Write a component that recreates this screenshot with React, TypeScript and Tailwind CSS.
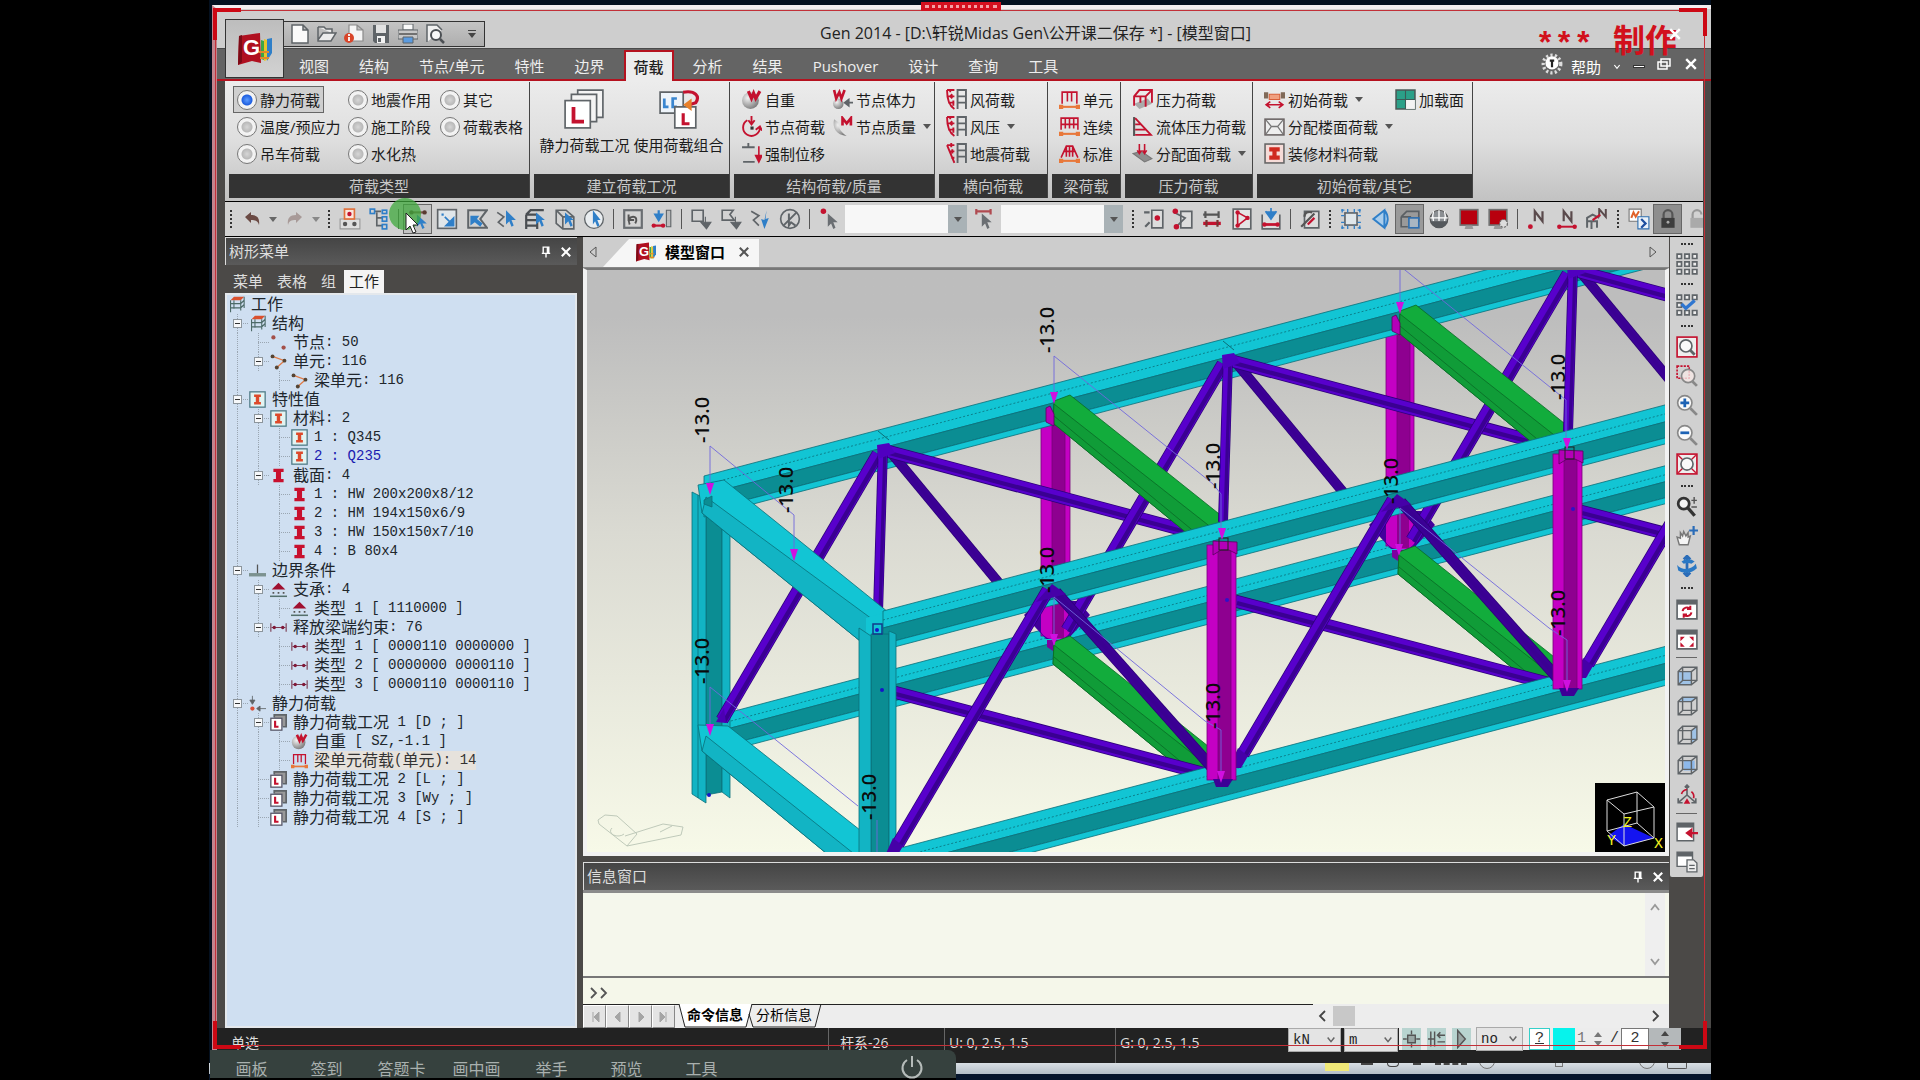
import type { ReactNode } from "react";

/* ---------- icons (20x20 grid) ---------- */

const G = "#5f6468";
const R = "#c4122f";
const B = "#2f7fc8";

const arrow = <path d="M9 6v11l3-3 2 5 2-1-2-4h4z" fill={B} />;
const grayArrow = <path d="M8 5v12l3-3 2 5 2-1-2-5h4z" fill="#6a6e72" />;

const ICONS: Record<string, ReactNode> = {
  undo: <path d="M3 8l6-5v3c6 0 9 3 8 10-1-4-3-5-8-5v3z" fill="#6b4a44" />,
  redo: <path d="M17 8l-6-5v3c-6 0-9 3-8 10 1-4 3-5 8-5v3z" fill="#a89a98" />,
  workTree: (
    <>
      <path d="M1 10h18v9H1z" fill="#dedede" stroke="#999" />
      <rect x="5" y="1" width="9" height="9" fill="#fbe6dc" stroke="#e0703a" strokeWidth="1.500" />
      <circle cx="9.500" cy="5.500" r="2" fill={R} />
      <circle cx="5.500" cy="14.500" r="2" fill="#555" />
      <circle cx="14" cy="14.500" r="2" fill="#555" />
    </>
  ),
  tree: (
    <g fill="none" stroke={B} strokeWidth="1.500">
      <path d="M6 3h6M8 4v5h5M8 9v7h5" stroke={G} />
      <rect x="2" y="1" width="4" height="4" />
      <rect x="13" y="2" width="4" height="3" />
      <rect x="13" y="8" width="4" height="4" />
      <rect x="13" y="15" width="4" height="4" />
    </g>
  ),
  selSingle: (
    <>
      <path d="M3 4h14" stroke="#7a5a4a" strokeWidth="2" />
      <circle cx="4" cy="4" r="2" fill="#5a3a30" />
      <circle cx="16" cy="4" r="2" fill="#5a3a30" />
      {arrow}
    </>
  ),
  selWindow: (
    <>
      <rect x="1.500" y="1.500" width="17" height="17" fill="#e0e6ea" stroke={G} strokeWidth="1.500" />
      <path d="M5 5h2v2H5z" fill={B} />
      <path d="M8 8l6 6M16 9v7H9z" fill={B} stroke={B} strokeWidth="1.500" />
    </>
  ),
  selPolygon: (
    <>
      <path d="M2 2h17l-6 8 6 8H2z" fill="none" stroke={G} strokeWidth="1.800" />
      <path d="M4 7h8l-2 3 5 4-2 3-5-4-4 3z" fill={B} />
    </>
  ),
  selLine: (
    <>
      <path d="M2 4l6 4-5 5 5 4" fill="none" stroke={G} strokeWidth="1.500" />
      <path d="M10 2v13l3-3 2 5 2-1-2-5h4z" fill={B} />
    </>
  ),
  selPlane: (
    <>
      <path d="M2 6l4-4h12M2 6h10M2 11h10M2 16h10M2 6v13M12 6v13" fill="none" stroke="#4a4e52" strokeWidth="2" />
      <path d="M11 4v11l3-3 2 5 2-1-2-5h3z" fill={B} />
    </>
  ),
  selVolume: (
    <>
      <path d="M2 2h9l7 6v11H8l-6-5zM2 2l6 6v11M8 8h10" fill="none" stroke={G} strokeWidth="1.500" />
      <path d="M10 4v11l3-3 2 5 2-1-2-5h3z" fill={B} />
    </>
  ),
  selCircle: (
    <>
      <circle cx="10" cy="10" r="8.500" fill="#e9edf0" stroke={G} strokeWidth="1.200" />
      <path d="M9 2v13l2-3 2 5 2-1-2-5h3z" fill={B} />
    </>
  ),
  selPrev: (
    <>
      <rect x="2" y="2" width="16" height="16" fill="#d4d4d4" stroke="#6a6e72" strokeWidth="2" />
      <path d="M7 15c-2-4 0-7 3-7s4 3 2 6M6 6v5h5" fill="none" stroke="#555" strokeWidth="1.800" />
    </>
  ),
  selNew: (
    <>
      <path d="M7 2v6M4 6l3 5 3-5z" stroke={B} strokeWidth="2" fill={B} />
      <path d="M2 16h9" stroke={R} strokeWidth="2" />
      <circle cx="2.500" cy="16" r="2" fill={R} />
      <circle cx="11" cy="16" r="2" fill={R} />
      <path d="M14 2h4v15h-4z" fill="#bbb" stroke={G} />
    </>
  ),
  unWindow: (
    <>
      <path d="M2 2h10v10H2z" fill="none" stroke={G} strokeWidth="1.500" />
      <path d="M14 8v6M10 13l5 6 4-6z" fill="#5f6468" stroke={G} />
    </>
  ),
  unPolygon: (
    <>
      <path d="M2 2h10l-3 4 4 5H2z" fill="none" stroke={G} strokeWidth="1.500" />
      <path d="M14 8v6M10 13l5 6 4-6z" fill="#5f6468" stroke={G} />
    </>
  ),
  unLine: (
    <>
      <path d="M2 3l7 4-5 4 5 5" fill="none" stroke={G} strokeWidth="1.500" />
      <path d="M16 2l-1 8 3-1-4 10-3-9 3 1z" fill={B} />
    </>
  ),
  unCircle: (
    <>
      <circle cx="10" cy="10" r="8.500" fill="none" stroke={G} strokeWidth="1.500" />
      <path d="M4 16L16 4M9 5v11l2-3 4 3" fill="none" stroke={G} strokeWidth="1.800" />
    </>
  ),
  nodePick: (
    <>
      <circle cx="4" cy="3" r="2.500" fill={R} />
      {grayArrow}
    </>
  ),
  elemPick: (
    <>
      <path d="M2 3h15M3 1v5M16 1v5" stroke="#b04a50" strokeWidth="2" />
      {grayArrow}
    </>
  ),
  actNode: (
    <>
      <path d="M8 2h10v16H8z" fill="#ddd" stroke={G} strokeWidth="1.500" />
      <path d="M1 4h5M2 17l4-4" stroke={G} strokeWidth="2" />
      <circle cx="13" cy="9" r="2.500" fill={R} />
    </>
  ),
  actElem: (
    <>
      <path d="M8 3h10v15H8z" fill="#ddd" stroke={G} strokeWidth="1.500" />
      <path d="M2 4l10 5-8 8" fill="none" stroke={G} strokeWidth="1.500" />
      <circle cx="3" cy="3" r="2.500" fill={R} />
      <circle cx="4" cy="17" r="2.500" fill={R} />
    </>
  ),
  swap: (
    <>
      <path d="M2 6h15M4 3v6M16 3v6" stroke="#555" strokeWidth="2" fill="none" />
      <path d="M2 14h16" stroke={R} strokeWidth="3" />
      <path d="M5 11v6M15 11v6" stroke="#733" strokeWidth="2" />
    </>
  ),
  triNode: (
    <>
      <rect x="2" y="1" width="16" height="18" fill="#e4e4e4" stroke={G} strokeWidth="1.500" />
      <path d="M6 4l9 5-9 7z" fill="none" stroke={R} strokeWidth="1.500" />
      <circle cx="6" cy="4" r="2" fill={R} />
      <circle cx="15" cy="9" r="2" fill={R} />
      <circle cx="6" cy="16" r="2" fill={R} />
    </>
  ),
  importAct: (
    <>
      <path d="M2 6v13h16V6" fill="#ddd" stroke={G} strokeWidth="1.500" />
      <path d="M3 15h14" stroke={R} strokeWidth="2.500" />
      <circle cx="4" cy="15" r="2" fill={R} />
      <circle cx="16" cy="15" r="2" fill={R} />
      <path d="M10 0v7M5 3l5 7 5-7" fill={B} stroke={B} strokeWidth="1.500" />
    </>
  ),
  redraw: (
    <>
      <path d="M5 3h13v15H5z" fill="#ddd" stroke={G} strokeWidth="1.500" />
      <path d="M2 17L14 5M5 8c0-4 3-5 7-4" stroke="#555" strokeWidth="2" fill="none" />
      <path d="M8 15l6-6" stroke={R} strokeWidth="2" />
    </>
  ),
  shrink: (
    <>
      <rect x="4.500" y="4.500" width="11" height="11" fill="#dfe6ea" stroke={G} strokeWidth="1.500" />
      <path
        d="M1 2h3M1 7h3M1 13h3M1 18h3M16 2h3M16 7h3M16 13h3M16 18h3M2 1v3M7 1v3M13 1v3M18 1v3M2 16v3M7 16v3M13 16v3M18 16v3"
        stroke={B}
        strokeWidth="1.200"
      />
    </>
  ),
  perspective: <path d="M14 2v16L4 10zM14 2c4 5 4 11 0 16" fill="#a9cdec" stroke={B} strokeWidth="1.800" />,
  hidden: (
    <>
      <path d="M2 8l5-5h11v9l-5 5M2 8h9M2 8v9h6" fill="none" stroke="#5b6064" strokeWidth="1.500" />
      <rect x="9" y="9" width="9" height="9" fill="#a9b6c2" stroke="#2f6fb0" strokeWidth="1.500" />
    </>
  ),
  globe: (
    <>
      <circle cx="10" cy="10" r="8" fill="#8b8f93" stroke="#555" />
      <path d="M2 9h16M10 2v10M5 3c-1 3-1 6 0 9M15 3c1 3 1 6 0 9" stroke="#fff" strokeWidth="1.200" fill="none" />
      <path d="M2 12h16c-2 5-4 6-8 6s-6-2-8-6z" fill="#55595d" />
    </>
  ),
  monitor: (
    <>
      <rect x="2" y="1.500" width="16" height="14" fill="#b8000e" stroke="#707070" strokeWidth="1.500" />
      <path d="M7 16h6l1 3H6z" fill="#999" />
    </>
  ),
  monitorOpt: (
    <>
      <rect x="2" y="1.500" width="16" height="14" fill="#b8000e" stroke="#707070" strokeWidth="1.500" />
      <path d="M7 16h6l1 3H6z" fill="#999" />
      <circle cx="15" cy="14" r="3.500" fill="#ddd" stroke="#666" strokeDasharray="2 1" />
    </>
  ),
  nodeNo: (
    <>
      <circle cx="4" cy="17" r="2.200" fill={R} />
      <path d="M8 12V3l7 9V3" fill="none" stroke="#5a4a4c" strokeWidth="2" />
    </>
  ),
  elemNo: (
    <>
      <path d="M3 17h14" stroke={R} strokeWidth="1.800" />
      <circle cx="3" cy="17" r="2" fill={R} />
      <circle cx="17" cy="17" r="2" fill={R} />
      <path d="M7 12V3l7 9V3" fill="none" stroke="#5a4a4c" strokeWidth="2" />
    </>
  ),
  propNo: (
    <>
      <path d="M1 18V9l5-3 6 3M1 12h9v6M5 12v7" fill="none" stroke={G} strokeWidth="1.800" />
      <path d="M12 8V1l6 7V1" fill="none" stroke="#5a4a4c" strokeWidth="1.800" />
      <path d="M6 11l7-5" stroke={R} strokeWidth="2" />
    </>
  ),
  convert: (
    <>
      <path d="M1 1h11v11H1z" fill="#fff" stroke="#777" />
      <path d="M3 9l2-5 2 4 3-5" fill="none" stroke="#e0622a" strokeWidth="1.800" />
      <path d="M9 8h10v11H9z" fill="#eaf2fa" stroke="#2f6fb0" />
      <path d="M12 10l4 4-4 4" fill="none" stroke="#1d4fa0" strokeWidth="2" />
    </>
  ),
  lock: (
    <>
      <path d="M6 9V6a4 4 0 018 0v3" fill="none" stroke="#555" strokeWidth="2" />
      <rect x="4" y="9" width="12" height="9" fill="#3d3d3d" />
      <circle cx="10" cy="13" r="1.300" fill="#aaa" />
    </>
  ),
  unlock: (
    <>
      <path d="M6 9V6a4 4 0 018 0" fill="none" stroke="#999" strokeWidth="2" />
      <rect x="4" y="9" width="12" height="9" fill="#aaa" />
    </>
  ),
  newFile: <path d="M2 1h11l5 5v13H2zM13 1v5h5" fill="#fafafa" stroke={G} strokeWidth="1.500" />,
  open: <path d="M1 3h6l2 2h6v4M1 3v13l5-7h13l-5 8H1" fill="#ececec" stroke={G} strokeWidth="1.500" />,
  info: (
    <>
      <path d="M5 1h8l6 5v11H5zM13 1v5h6" fill="#f5f5f5" stroke="#8a8a8a" strokeWidth="1.200" />
      <circle cx="5" cy="14" r="5" fill="#d8452a" />
      <path d="M5 10v2M5 13v4" stroke="#fff" strokeWidth="1.800" />
    </>
  ),
  save: (
    <>
      <path d="M2 1h16v18H4l-2-2z" fill={G} />
      <path d="M5 1h10v8H5z" fill="#e2e2e2" />
      <path d="M6 12h8v7H6z" fill="#f3f3f3" />
      <path d="M7 14h3v4H7z" fill={G} />
    </>
  ),
  print: (
    <>
      <path d="M5 0h10v6H5z" fill="#fafafa" stroke={G} />
      <path d="M0 6h20v9H0z" fill="#c8c8c8" stroke={G} />
      <path d="M1 10h18" stroke="#555" strokeWidth="1.500" />
      <path d="M5 13h10v6H5z" fill="#5b9be0" stroke={G} />
    </>
  ),
  preview: (
    <>
      <path d="M2 18V1h10l5 5" fill="#f0f0f0" stroke={G} strokeWidth="1.500" />
      <circle cx="11" cy="11" r="5" fill="#f8f8f8" stroke="#4c5054" strokeWidth="2" />
      <path d="M15 15l4 4" stroke="#4c5054" strokeWidth="2.500" />
    </>
  ),
  weight: (
    <>
      <circle cx="9" cy="11" r="8" fill="url(#ball)" />
      <path d="M7 2l3 7 2-5 2 5 4-7" fill="none" stroke={R} strokeWidth="3" />
    </>
  ),
  bodyForce: (
    <>
      <circle cx="6" cy="14" r="5" fill="url(#ball)" />
      <path d="M2 1l2 8 3-6 2 6 3-8" fill="none" stroke={R} strokeWidth="2.500" />
      <path d="M20 13h-6M16 10l-4 3 4 3z" stroke={G} strokeWidth="1.500" fill={G} />
    </>
  ),
  nodeMass: (
    <>
      <path d="M2 3c-2 8 2 15 12 16-5-3-8-7-8-13z" fill="url(#ball)" />
      <path d="M10 9V2l4 5 4-5v7" fill="none" stroke={R} strokeWidth="2.500" />
    </>
  ),
  nodeLoad: (
    <>
      <path d="M6 4a8 8 0 1012 7M10 0v7M7 4l3 4 3-4M14 13l4-3 2 4" fill="none" stroke={R} strokeWidth="1.800" />
      <rect x="9" y="10" width="3" height="3" fill="#333" />
    </>
  ),
  dispIcon: (
    <>
      <path d="M1 4h12M7 0v4M2 18h11" stroke={G} strokeWidth="1.800" />
      <path d="M17 3v12M14 12l3 6 3-6z" stroke={R} strokeWidth="1.500" fill={R} />
    </>
  ),
  wind: (
    <>
      <path d="M11 19V1h8v18M11 7h8M11 13h8" fill="none" stroke={G} strokeWidth="1.800" />
      <path d="M1 1h7M1 7h7M2 13h6M1 1c0 9 2 15 7 18M4 0v3M6 5l-2 2 2 2M7 11v5" fill="none" stroke={R} strokeWidth="1.800" />
    </>
  ),
  quake: (
    <>
      <path d="M11 19V1h8v18M11 7h8M11 13h8" fill="none" stroke={G} strokeWidth="1.800" />
      <path d="M1 2h7M3 8h5M5 14h3M1 2l7 17M5 0v4M6 6v4" fill="none" stroke={R} strokeWidth="1.800" />
    </>
  ),
  beamLoad: (
    <>
      <path d="M3 14V3h14v11M8 3v9M12 3v9" fill="none" stroke={R} strokeWidth="1.500" />
      <path d="M1 17h18" stroke="#e8783a" strokeWidth="2" />
      <path d="M0 15h4v4H0zM16 15h4v4h-4z" fill="#e8783a" />
    </>
  ),
  beamCont: (
    <>
      <path d="M2 13V2h16v11M6 2v10M10 2v10M14 2v10M2 8h16" fill="none" stroke={R} strokeWidth="1.500" />
      <path d="M1 17h18" stroke="#e8783a" strokeWidth="2" />
      <path d="M0 15h4v4H0zM16 15h4v4h-4z" fill="#e8783a" />
    </>
  ),
  beamTypical: (
    <>
      <path d="M2 14L7 3h6l5 11M7 3v10M10 3v10M13 3v10M5 8h10" fill="none" stroke={R} strokeWidth="1.500" />
      <path d="M1 17h18" stroke="#e8783a" strokeWidth="2" />
      <path d="M0 15h4v4H0zM16 15h4v4h-4z" fill="#e8783a" />
    </>
  ),
  pressure: (
    <>
      <path d="M2 14l5 5 12-5-4-5z" fill="#aaa" />
      <path d="M2 16V7l5-6h12v12M2 7h11v10M13 7l6-6M8 7v6" fill="none" stroke={R} strokeWidth="1.800" />
    </>
  ),
  fluid: (
    <>
      <path d="M2 1v18" stroke="#555" strokeWidth="2" />
      <path d="M3 2l15 16H3M3 8h5M3 13h10" fill="none" stroke={R} strokeWidth="1.800" />
    </>
  ),
  planeLoad: (
    <>
      <path d="M1 10l8-2 10 7-7 3z" fill="#8d8d8d" stroke="#777" />
      <path d="M7 1v8M12 1v8M5 7l2 3 2-3M10 7l2 3 2-3" fill="none" stroke={R} strokeWidth="1.500" />
    </>
  ),
  initLoad: (
    <>
      <path d="M3 15h14M6 12l-4 3 4 3M14 12l4 3-4 3" fill="none" stroke={R} strokeWidth="1.500" />
      <path d="M5 5h10v5H5z" fill="#f0a080" stroke="#d8603a" />
      <path d="M0 3h4v6H0zM16 3h4v6h-4z" fill="#806a58" />
    </>
  ),
  floorLoad: (
    <>
      <rect x="1" y="3" width="18" height="15" fill="#eee" stroke="#6b6464" strokeWidth="1.500" />
      <path d="M2 4l5 6-5 7M18 4l-5 6 5 7M7 10h6" fill="none" stroke="#777" strokeWidth="1.200" />
    </>
  ),
  finish: (
    <>
      <rect x="1" y="1" width="18" height="18" fill="#f6dcd8" stroke="#666" strokeWidth="1.500" />
      <path d="M5 4h10v4h-3v4h3v4H5v-4h3V8H5z" fill="#cf2a20" />
    </>
  ),
  facePlane: (
    <>
      <rect x="1" y="1" width="18" height="18" fill="#2ba088" stroke="#4a5a58" strokeWidth="1.500" />
      <path d="M10 10h9v9h-9z" fill="#f3f3f3" />
      <path d="M10 1v18M1 10h18" stroke="#3c5b56" />
    </>
  ),
  grid: (
    <path
      d="M1 1h4v4H1zM8 1h4v4H8zM15 1h4v4h-4zM1 8h4v4H1zM8 8h4v4H8zM15 8h4v4h-4zM1 15h4v4H1zM8 15h4v4H8zM15 15h4v4h-4z"
      fill="#eee"
      stroke={G}
      strokeWidth="1.500"
    />
  ),
  gridCheck: (
    <>
      <path
        d="M1 1h4v4H1zM8 1h4v4H8zM15 1h4v4h-4zM1 15h4v4H1zM8 15h4v4H8zM15 15h4v4h-4zM1 8h4v4H1z"
        fill="#eee"
        stroke={G}
        strokeWidth="1.500"
      />
      <path d="M5 9l4 4 8-7" fill="none" stroke="#2f76d0" strokeWidth="3" />
    </>
  ),
  zoomAuto: (
    <>
      <rect x="1" y="1" width="18" height="18" fill="#eee" stroke={R} strokeWidth="1.500" />
      <circle cx="9" cy="9" r="5.500" fill="#fafafa" stroke={G} strokeWidth="1.500" />
      <path d="M13 13l4 4" stroke={G} strokeWidth="2.500" />
    </>
  ),
  zoomWin: (
    <>
      <path d="M1 1h11v11H1z" fill="none" stroke={R} strokeDasharray="2 1" strokeWidth="1.500" />
      <circle cx="11" cy="10" r="6" fill="#f6e8e6" fillOpacity=".8" stroke="#888" strokeWidth="1.500" />
      <path d="M15 15l4 4" stroke="#888" strokeWidth="2.500" />
    </>
  ),
  zoomIn: (
    <>
      <circle cx="8" cy="8" r="6.500" fill="#fafafa" stroke="#888" strokeWidth="1.500" />
      <path d="M13 13l6 6" stroke="#888" strokeWidth="2.500" />
      <path d="M4 8h8M8 4v8" stroke="#1c62b4" strokeWidth="2.500" />
    </>
  ),
  zoomOut: (
    <>
      <circle cx="8" cy="8" r="6.500" fill="#fafafa" stroke="#888" strokeWidth="1.500" />
      <path d="M13 13l6 6" stroke="#888" strokeWidth="2.500" />
      <path d="M4 8h8" stroke="#1c62b4" strokeWidth="2.500" />
    </>
  ),
  zoomFit: (
    <>
      <rect x="1" y="1" width="18" height="18" fill="#eee" stroke={R} strokeWidth="1.500" />
      <path d="M2 2l16 16M18 2L2 18" stroke={R} strokeWidth="1.200" />
      <circle cx="10" cy="10" r="5.500" fill="#fafafa" stroke={G} strokeWidth="1.500" />
    </>
  ),
  zoomDyn: (
    <>
      <circle cx="7" cy="7" r="5" fill="#f4f4f4" stroke="#333" strokeWidth="2.500" />
      <path d="M11 11l6 7" stroke="#333" strokeWidth="3" />
      <path d="M14 4h5M16.500 1v6M14 10h5" stroke="#555" strokeWidth="1.300" />
    </>
  ),
  pan: (
    <>
      <path d="M3 18l-2-7 3 1V7l2 3 1-4 2 4 2-3v4l2-1-2 8z" fill="#f5f5f5" stroke="#777" strokeWidth="1.300" />
      <path d="M12 5h8M16 1v8" stroke="#2a6cb8" strokeWidth="2" />
    </>
  ),
  rotate: (
    <>
      <path d="M10 2v16M7 4l3-3 3 3M7 16l3 3 3-3" fill="none" stroke="#2a6cb8" strokeWidth="2.500" />
      <path d="M1 9c4 5 13 5 17-1l1 4c-5 5-12 5-17 2zM5 6c3-3 9-3 12 0l-3 2c-2-1-5-1-7 0z" fill="#2a78c4" />
    </>
  ),
  winRefresh: (
    <>
      <path d="M1 2h18v17H1z" fill="#fff" stroke={G} strokeWidth="1.500" />
      <path d="M1 2h18v4H1z" fill={G} />
      <path d="M6 12a4 4 0 017-2M14 13a4 4 0 01-7 2M13 7v3h-3M7 18v-3h3" fill="none" stroke={R} strokeWidth="1.800" />
    </>
  ),
  winFit: (
    <>
      <path d="M1 2h18v17H1z" fill="#fff" stroke={G} strokeWidth="1.500" />
      <path d="M1 2h18v4H1z" fill={G} />
      <path d="M4 8h4l-4 4zM16 8h-4l4 4zM4 17h4l-4-4zM16 17h-4l4-4z" fill={R} />
    </>
  ),
  cubeFront: (
    <>
      <path d="M2 6h12v12H2z" fill="#9fc2e6" />
      <path d="M2 6h12v12H2zM6 2h13v12H6zM2 6l4-4M14 6l5-4M14 18l5-4M2 18l4-4" fill="none" stroke={G} strokeWidth="1.300" />
    </>
  ),
  cubeTop: (
    <>
      <path d="M2 6l4-4h13l-5 4z" fill="#9fc2e6" />
      <path d="M2 6h12v12H2zM6 2h13v12H6zM2 6l4-4M14 6l5-4M14 18l5-4M2 18l4-4" fill="none" stroke={G} strokeWidth="1.300" />
    </>
  ),
  cubeSide: (
    <>
      <path d="M14 6l5-4v12l-5 4z" fill="#9fc2e6" />
      <path d="M2 6h12v12H2zM6 2h13v12H6zM2 6l4-4M14 6l5-4M14 18l5-4M2 18l4-4" fill="none" stroke={G} strokeWidth="1.300" />
    </>
  ),
  cubeBack: (
    <>
      <path d="M7 6h10v9H7z" fill="#8db8ea" />
      <path d="M2 6h12v12H2zM6 2h13v12H6zM2 6l4-4M14 6l5-4M14 18l5-4M2 18l4-4" fill="none" stroke={G} strokeWidth="1.300" />
    </>
  ),
  iso: (
    <>
      <path d="M10 10V1M10 10l-8 7M10 10l8 7M8 3l2-2 2 2M2 13v4h4M18 13v4h-4" fill="none" stroke={G} strokeWidth="1.500" />
      <path d="M5 9a6 6 0 015-4M14 7a6 6 0 012 6" fill="none" stroke={R} strokeWidth="1.500" />
      <path d="M7 18l3-5 3 5z" fill={R} />
    </>
  ),
  winPrev: (
    <>
      <path d="M1 2h15v16H1z" fill="#fff" stroke={G} strokeWidth="1.300" />
      <path d="M1 2h15v4H1z" fill={G} />
      <path d="M20 11h-7M14 8l-4 3 4 3z" fill={R} stroke={R} strokeWidth="2" />
    </>
  ),
  winDoc: (
    <>
      <path d="M1 1h14v13H1z" fill="#fff" stroke={G} strokeWidth="1.300" />
      <path d="M1 1h14v4H1z" fill={G} />
      <path d="M10 8h6l3 3v8h-9zM12 13h5M12 16h5" fill="#eee" stroke={G} strokeWidth="1.200" />
    </>
  ),
  frame: (
    <>
      <path d="M3 5l4-4h12l-4 4z" fill="#d9502e" />
      <path d="M3 5v14M15 5v12M19 1v13M3 9h12l4-4M3 14h12l4-4M7 5v10" fill="none" stroke="#4d6a68" strokeWidth="1.300" />
    </>
  ),
  nodes: (
    <>
      <circle cx="4" cy="4" r="2.500" fill="#a34f48" />
      <circle cx="16" cy="16" r="2.500" fill="#a34f48" />
    </>
  ),
  elems: (
    <>
      <path d="M3 4l14 5-9 8" fill="none" stroke="#e07a45" strokeWidth="1.500" />
      <circle cx="3" cy="4" r="2.300" fill="#543" />
      <circle cx="17" cy="9" r="2.300" fill="#543" />
      <circle cx="8" cy="17" r="2.300" fill="#543" />
    </>
  ),
  prop: (
    <>
      <rect x="1" y="1" width="18" height="18" fill="#e2f4f2" stroke="#4d7a86" strokeWidth="1.500" />
      <path d="M6 4h8v3h-2v6h2v3H6v-3h2V7H6z" fill="#dd4a2a" />
    </>
  ),
  section: <path d="M4 2h12v4h-3v8h3v4H4v-4h3V6H4z" fill="#c8102e" />,
  boundary: (
    <>
      <path d="M10 3v11" stroke="#555" strokeWidth="1.500" />
      <path d="M0 13h20v4H0z" fill="#7c9290" />
    </>
  ),
  support: (
    <>
      <path d="M10 2l8 8H2z" fill="#a01030" />
      <path d="M3 14h2M9 14h2M15 14h2" stroke="#555" strokeWidth="2" />
      <path d="M0 18h20" stroke="#55706c" strokeWidth="1.800" />
    </>
  ),
  release: (
    <>
      <path d="M1 5v10M19 5v10M2 10h16" stroke="#7a3a50" strokeWidth="1.300" />
      <circle cx="5" cy="10" r="2" fill="#801838" />
      <circle cx="15" cy="10" r="2" fill="#801838" />
    </>
  ),
  loads: (
    <>
      <path d="M4 1v8M1 6l3 5 3-5zM20 16h-8M13 13l-4 3 4 3z" fill={G} stroke={G} />
      <circle cx="4" cy="16" r="2.500" fill="#d8503a" />
    </>
  ),
  loadCase: (
    <>
      <path d="M5 4V1h14v14h-4" fill="#999" stroke={G} strokeWidth="2" />
      <rect x="1" y="5" width="13" height="14" fill="#fff" stroke="#556" strokeWidth="1.500" />
      <path d="M6 8v7h4" fill="none" stroke={R} strokeWidth="2.500" />
    </>
  ),
  pin: <path d="M6 3h8v9H6zM4 12h12M10 12v6M12 3v9" fill="none" stroke="#fff" strokeWidth="2" />,
  cross: <path d="M4 4l12 12M16 4L4 16" stroke="currentColor" strokeWidth="3" />,
  sheets: (
    <>
      <path d="M7 4V1h12v13h-3" fill="#f4f4f4" stroke={G} strokeWidth=".8" />
      <path d="M4 6V3h12v13h-3" fill="#f4f4f4" stroke={G} strokeWidth=".8" />
      <rect x="1" y="6" width="12" height="13" fill="#fff" stroke={G} strokeWidth=".8" />
      <path d="M5 9v7h5" fill="none" stroke={R} strokeWidth="1.800" />
    </>
  ),
  combine: (
    <>
      <path d="M1 2h11v10H1z" fill="#eef4fa" stroke={G} strokeWidth=".8" />
      <path d="M3 5v4h2M9 5H7v4h2" fill="none" stroke="#3a86d0" strokeWidth="1.300" />
      <path d="M8 9h10v10H8z" fill="#fff" stroke={G} strokeWidth=".8" />
      <path d="M12 12v5h3" fill="none" stroke={R} strokeWidth="1.500" />
      <path d="M12 2c6-1 8 2 6 5l-3 1" fill="none" stroke={R} strokeWidth="1.500" />
      <path d="M16 5v6l-4-3z" fill="#e8802a" />
    </>
  ),
};

function Icon({ name, className = "size-5" }: { name: string; className?: string }) {
  return (
    <svg viewBox="0 0 20 20" className={`${className} shrink-0`} aria-hidden="true">
      {ICONS[name]}
    </svg>
  );
}

function Logo({ className }: { className: string }) {
  return (
    <svg viewBox="0 0 36 34" className={className} aria-hidden="true">
      <path d="M2 4L23 1l1 30-9-2L1 33z" fill="#b01020" />
      <path d="M2 4l3-1v27l-4 3z" fill="#7c0a16" />
      <text x="6" y="23" fontSize="22" fontWeight="700" fill="#fff" fontFamily="Liberation Sans, sans-serif">
        G
      </text>
      <path d="M24 8l3 1v19l-3-1z" fill="#3aa648" />
      <path d="M27 7l3 1v20l-3 1z" fill="#e6c52a" />
      <path d="M30 7l5-1v15l-5 8z" fill="#2f7fc8" />
      <path d="M22 20h10M23 26h9" stroke="#e08a2a" strokeWidth="2" />
    </svg>
  );
}

function Caret({ className = "text-[#555]" }: { className?: string }) {
  return (
    <svg viewBox="0 0 8 5" className={`h-[5px] w-2 shrink-0 ${className}`} aria-hidden="true">
      <path d="M0 0h8L4 5z" fill="currentColor" />
    </svg>
  );
}

function Chevron({ d, className }: { d: string; className: string }) {
  return (
    <svg viewBox="0 0 12 12" className={className} aria-hidden="true">
      <path d={d} fill="none" stroke="currentColor" strokeWidth="1.800" />
    </svg>
  );
}

const UP = "M2 9l4-5 4 5";
const DOWN = "M2 3l4 5 4-5";
const LEFT = "M8 1L3 6l5 5";
const RIGHT = "M4 1l5 5-5 5";

/* ---------- title bar and tabs ---------- */

const TABS = ["视图", "结构", "节点/单元", "特性", "边界", "荷载", "分析", "结果", "Pushover", "设计", "查询", "工具"];
const QUICK = ["newFile", "open", "info", "save", "print", "preview"];

function Header() {
  return (
    <header className="relative">
      <div className="flex h-[39px] items-center bg-[#cecece] pl-[66px]">
        <div className="mt-2.5 flex h-[26px] w-[202px] items-center gap-[7px] border border-[#333] bg-linear-to-b from-[#c4c4c4] to-[#aeaeae] pl-1.5">
          {QUICK.map((name) => (
            <button key={name} type="button" aria-label={name}>
              <Icon name={name} />
            </button>
          ))}
          <div className="ml-4 flex flex-col items-center gap-0.5">
            <span className="h-px w-2 bg-[#444]" />
            <Caret className="text-[#444]" />
          </div>
        </div>
        <h1 className="mt-2 mr-[460px] flex-1 text-right text-base leading-5 whitespace-nowrap text-[#222]">
          Gen 2014 - [D:\轩锐Midas Gen\公开课二保存 *] - [模型窗口]
        </h1>
      </div>
      <nav className="flex h-[33px] items-end border-t border-[#4a4a4a] border-b-2 border-b-[#b5121f] bg-[#646464] pl-[67px]">
        {TABS.map((tab) => (
          <a
            key={tab}
            href="#ribbon"
            className={
              tab === "荷载"
                ? "mx-1 -mb-0.5 flex h-[31px] items-center border-x-2 border-t-2 border-[#b5121f] bg-[#ececec] px-2 text-[15px] leading-5 font-medium text-[#222]"
                : "flex h-[27px] items-center px-[15px] text-[15px] leading-5 text-[#eee]"
            }
          >
            {tab}
          </a>
        ))}
        <div className="ml-auto flex h-full items-center gap-3 pr-3 text-[15px] text-white">
          <svg viewBox="0 0 20 20" className="size-[22px]" aria-hidden="true">
            <circle cx="10" cy="10" r="8" fill="none" stroke="#ddd" strokeWidth="3" strokeDasharray="2 2" />
            <circle cx="10" cy="9" r="6" fill="#fff" />
            <path d="M10 6v7M8 7h4" stroke="#222" strokeWidth="2" />
          </svg>
          <button type="button" className="-ml-1 flex items-center gap-3 pt-1.5">
            帮助
            <Chevron d={DOWN} className="size-2" />
          </button>
          <button type="button" aria-label="最小化" className="mt-1 h-[3px] w-3 border border-[#333] bg-white" />
          <button type="button" aria-label="还原">
            <svg viewBox="0 0 14 12" className="h-3 w-3.5" aria-hidden="true">
              <path d="M4 1h9v7H4zM1 4h9v7H1z" fill="#646464" stroke="#fff" strokeWidth="1.500" />
            </svg>
          </button>
          <button type="button" aria-label="关闭文档">
            <Icon name="cross" className="size-4" />
          </button>
        </div>
      </nav>
      <button
        type="button"
        aria-label="应用菜单"
        className="absolute top-[10px] left-2 flex h-[59px] w-[59px] items-center justify-center border border-[#333] bg-linear-to-b from-[#bdbdbd] to-[#d2d2d2]"
      >
        <Logo className="h-[34px] w-9" />
      </button>
    </header>
  );
}

/* ---------- ribbon ---------- */

type CommandProps = { icon: string; label: string; menu?: boolean; className?: string };

function Command({ icon, label, menu, className = "" }: CommandProps) {
  return (
    <button type="button" className={`flex h-[27px] items-center gap-[3px] text-left whitespace-nowrap ${className}`}>
      <Icon name={icon} className="size-[21px]" />
      {label}
      {menu && <Caret className="ml-1 text-[#555]" />}
    </button>
  );
}

function RibbonGroup({ title, className, children }: { title: string; className: string; children: ReactNode }) {
  return (
    <section className={`mr-1 flex shrink-0 flex-col border-r border-[#444] ${className}`}>
      <div className="flex-1 pt-1">{children}</div>
      <h2 className="flex h-6 items-center justify-center bg-[#333] text-[15px] text-[#c9c9c9]">{title}</h2>
    </section>
  );
}

const LOAD_TYPES = ["静力荷载", "地震作用", "其它", "温度/预应力", "施工阶段", "荷载表格", "吊车荷载", "水化热"];

function Ribbon() {
  return (
    <div
      id="ribbon"
      className="flex h-[120px] bg-linear-to-b from-[#ececec] via-[#dedede] to-[#c2c2c2] pt-px pb-[3px] pl-1 text-[15px] leading-5 text-[#1c1c1c]"
    >
      <RibbonGroup title="荷载类型" className="w-[301px]">
        <div className="grid grid-cols-[111px_92px_1fr] pl-1">
          {LOAD_TYPES.map((label) => (
            <label
              key={label}
              className={
                label === "静力荷载"
                  ? "flex h-[27px] w-[91px] items-center gap-[3px] border border-[#666] bg-[#cfcfcf] pl-[3px] whitespace-nowrap"
                  : "flex h-[27px] items-center gap-[3px] pl-1 whitespace-nowrap"
              }
            >
              <input
                type="radio"
                name="loadType"
                defaultChecked={label === "静力荷载"}
                className="size-5 shrink-0 appearance-none rounded-full border border-[#777] bg-[radial-gradient(circle,#d6d6d6_0,#b9b9b9_5px,#f4f4f4_6px,#ececec_100%)] checked:bg-[radial-gradient(circle,#5b9bff_0,#1f5fe0_5px,#f4f4f4_6px,#ececec_100%)]"
              />
              {label}
            </label>
          ))}
        </div>
      </RibbonGroup>
      <RibbonGroup title="建立荷载工况" className="w-[196px]">
        <div className="flex justify-center gap-1 pt-0.5">
          <button type="button" className="flex flex-col items-center gap-[5px] whitespace-nowrap">
            <Icon name="sheets" className="size-[42px]" />
            静力荷载工况
          </button>
          <button type="button" className="flex flex-col items-center gap-[5px] whitespace-nowrap">
            <Icon name="combine" className="size-[42px]" />
            使用荷载组合
          </button>
        </div>
      </RibbonGroup>
      <RibbonGroup title="结构荷载/质量" className="w-[201px]">
        <div className="grid grid-cols-[91px_1fr] pl-[7px]">
          <Command icon="weight" label="自重" />
          <Command icon="bodyForce" label="节点体力" />
          <Command icon="nodeLoad" label="节点荷载" />
          <Command icon="nodeMass" label="节点质量" menu />
          <Command icon="dispIcon" label="强制位移" />
        </div>
      </RibbonGroup>
      <RibbonGroup title="横向荷载" className="w-[109px]">
        <div className="flex flex-col pl-[7px]">
          <Command icon="wind" label="风荷载" />
          <Command icon="wind" label="风压" menu />
          <Command icon="quake" label="地震荷载" />
        </div>
      </RibbonGroup>
      <RibbonGroup title="梁荷载" className="w-[69px]">
        <div className="flex flex-col pl-[7px]">
          <Command icon="beamLoad" label="单元" />
          <Command icon="beamCont" label="连续" />
          <Command icon="beamTypical" label="标准" />
        </div>
      </RibbonGroup>
      <RibbonGroup title="压力荷载" className="w-[128px]">
        <div className="flex flex-col pl-[7px]">
          <Command icon="pressure" label="压力荷载" />
          <Command icon="fluid" label="流体压力荷载" />
          <Command icon="planeLoad" label="分配面荷载" menu />
        </div>
      </RibbonGroup>
      <RibbonGroup title="初始荷载/其它" className="w-[216px]">
        <div className="grid grid-cols-[131px_1fr] pl-[7px]">
          <Command icon="initLoad" label="初始荷载" menu />
          <Command icon="facePlane" label="加载面" />
          <Command icon="floorLoad" label="分配楼面荷载" menu className="col-span-2" />
          <Command icon="finish" label="装修材料荷载" className="col-span-2" />
        </div>
      </RibbonGroup>
    </div>
  );
}

/* ---------- main toolbar ---------- */

function Grip() {
  return (
    <div className="flex w-3 shrink-0 justify-center">
      <div className="h-[18px] border-l-2 border-dotted border-[#333]" />
    </div>
  );
}

function Sep() {
  return <div className="mx-1 h-5 w-px shrink-0 bg-[#555]" />;
}

const TOOL = "flex h-[30px] w-[29px] items-center justify-center";
const TOOL_STATE: Record<string, string> = {
  selSingle: "border border-[#666] bg-[#c4c4c4]",
  hidden: "border border-[#666] bg-[#9a9a9a]",
  lock: "border border-[#666] bg-[#8e8e8e]",
};

function ToolGroup({ icons, className }: { icons: string[]; className: string }) {
  return (
    <div className={`flex shrink-0 justify-around ${className}`}>
      {icons.map((name) => (
        <button key={name} type="button" aria-label={name} className={`${TOOL} ${TOOL_STATE[name] ?? ""}`}>
          <Icon name={name} className="size-[22px]" />
        </button>
      ))}
    </div>
  );
}

function Combo({ label }: { label: string }) {
  return (
    <div className="relative h-[28px] w-[122px] shrink-0 bg-[#f7f7f7]">
      <select aria-label={label} className="size-full appearance-none bg-transparent px-2" />
      <span className="pointer-events-none absolute inset-y-0 right-0 flex w-[19px] items-center justify-center bg-[#a9b2b6]">
        <Caret />
      </span>
    </div>
  );
}

function Toolbar() {
  return (
    <div className="flex h-[36px] shrink-0 items-center overflow-hidden border-y border-black bg-[#d2d2d2]">
      <Grip />
      <button type="button" aria-label="撤销" className="flex w-[29px] shrink-0 justify-center">
        <Icon name="undo" />
      </button>
      <Caret className="mx-[3px] text-[#666]" />
      <button type="button" aria-label="重做" className="flex w-[29px] shrink-0 justify-center">
        <Icon name="redo" />
      </button>
      <Caret className="mx-[3px] text-[#888]" />
      <Grip />
      <ToolGroup className="w-[59px]" icons={["workTree", "tree"]} />
      <Sep />
      <ToolGroup
        className="w-[206px]"
        icons={["selSingle", "selWindow", "selPolygon", "selLine", "selPlane", "selVolume", "selCircle"]}
      />
      <Sep />
      <ToolGroup className="w-[59px]" icons={["selPrev", "selNew"]} />
      <Sep />
      <ToolGroup className="w-[119px]" icons={["unWindow", "unPolygon", "unLine", "unCircle"]} />
      <Sep />
      <ToolGroup className="w-[31px]" icons={["nodePick"]} />
      <Combo label="选择节点" />
      <ToolGroup className="w-[34px]" icons={["elemPick"]} />
      <Combo label="选择单元" />
      <div className="w-1 shrink-0" />
      <Grip />
      <ToolGroup className="w-[147px]" icons={["actNode", "actElem", "swap", "triNode", "importAct"]} />
      <Sep />
      <ToolGroup className="w-[29px]" icons={["redraw"]} />
      <Grip />
      <ToolGroup
        className="w-[177px]"
        icons={["shrink", "perspective", "hidden", "globe", "monitor", "monitorOpt"]}
      />
      <Sep />
      <ToolGroup className="w-[90px]" icons={["nodeNo", "elemNo", "propNo"]} />
      <Grip />
      <ToolGroup className="w-[88px]" icons={["convert", "lock", "unlock"]} />
    </div>
  );
}

/* ---------- tree panel ---------- */

type Row = { level: number; icon: string; text: string; open?: boolean; tone?: "blue" | "hot"; lines?: number[] };

const TREE: Row[] = [
  { level: 0, icon: "frame", text: "工作" },
  { level: 1, icon: "frame", text: "结构", open: true },
  { level: 2, icon: "nodes", text: "节点: 50", lines: [1] },
  { level: 2, icon: "elems", text: "单元: 116", open: true, lines: [1] },
  { level: 3, icon: "elems", text: "梁单元: 116", lines: [1] },
  { level: 1, icon: "prop", text: "特性值", open: true },
  { level: 2, icon: "prop", text: "材料: 2", open: true, lines: [1] },
  { level: 3, icon: "prop", text: "1 : Q345", lines: [1, 2] },
  { level: 3, icon: "prop", text: "2 : Q235", tone: "blue", lines: [1, 2] },
  { level: 2, icon: "section", text: "截面: 4", open: true, lines: [1] },
  { level: 3, icon: "section", text: "1 : HW 200x200x8/12", lines: [1] },
  { level: 3, icon: "section", text: "2 : HM 194x150x6/9", lines: [1] },
  { level: 3, icon: "section", text: "3 : HW 150x150x7/10", lines: [1] },
  { level: 3, icon: "section", text: "4 : B 80x4", lines: [1] },
  { level: 1, icon: "boundary", text: "边界条件", open: true },
  { level: 2, icon: "support", text: "支承: 4", open: true, lines: [1] },
  { level: 3, icon: "support", text: "类型 1 [ 1110000 ]", lines: [1, 2] },
  { level: 2, icon: "release", text: "释放梁端约束: 76", open: true, lines: [1] },
  { level: 3, icon: "release", text: "类型 1 [ 0000110 0000000 ]", lines: [1] },
  { level: 3, icon: "release", text: "类型 2 [ 0000000 0000110 ]", lines: [1] },
  { level: 3, icon: "release", text: "类型 3 [ 0000110 0000110 ]", lines: [1] },
  { level: 1, icon: "loads", text: "静力荷载", open: true },
  { level: 2, icon: "loadCase", text: "静力荷载工况 1 [D ; ]", open: true },
  { level: 3, icon: "weight", text: "自重 [ SZ,-1.1 ]", lines: [2] },
  { level: 3, icon: "beamLoad", text: "梁单元荷载(单元): 14", tone: "hot", lines: [2] },
  { level: 2, icon: "loadCase", text: "静力荷载工况 2 [L ; ]" },
  { level: 2, icon: "loadCase", text: "静力荷载工况 3 [Wy ; ]" },
  { level: 2, icon: "loadCase", text: "静力荷载工况 4 [S ; ]" },
];

// Chinese runs are set at 16px, the monospaced Latin runs at 14px.
function TreeText({ text }: { text: string }) {
  return (
    <>
      {text.split(/([\u4e00-\u9fff]+)/).map((run, i) =>
        i % 2 === 1 ? (
          <span key={i} className="text-base leading-[19px]">
            {run}
          </span>
        ) : (
          <span key={i} className="font-['Liberation_Mono','Noto_Sans_CJK_SC',monospace] text-sm leading-[19px] whitespace-pre">
            {run}
          </span>
        ),
      )}
    </>
  );
}

function TreeRow({ row }: { row: Row }) {
  const guides = Array.from({ length: Math.max(row.level - 1, 0) }, (_, i) => i + 1);
  const tone = row.tone === "blue" ? "text-[#1b1bb0]" : row.tone === "hot" ? "bg-[#e6e2dc] text-[#333]" : "text-[#20262c]";
  return (
    <li className="flex h-[19px] items-center">
      {guides.map((g) => (
        <span key={g} className="flex h-full w-[21px] shrink-0 justify-center">
          {(g === 1 || row.lines?.includes(g)) && <span className="h-full border-l border-dotted border-[#9aa6b2]" />}
        </span>
      ))}
      {row.level > 0 && (
        <span className="relative flex h-full w-[21px] shrink-0 items-center justify-center">
          <span className="absolute inset-y-0 left-[10px] border-l border-dotted border-[#9aa6b2]" />
          <span className="absolute top-[9px] right-0 left-[10px] border-t border-dotted border-[#9aa6b2]" />
          {row.open && (
            <button
              type="button"
              aria-label="折叠"
              className="relative flex size-[9px] items-center justify-center border border-[#8c959c] bg-[#f6f8fa]"
            >
              <span className="h-px w-[5px] bg-[#333]" />
            </button>
          )}
        </span>
      )}
      <Icon name={row.icon} className="ml-px size-[17px]" />
      <span className={`ml-1.5 flex h-full items-center whitespace-nowrap ${tone}`}>
        <TreeText text={row.text} />
      </span>
    </li>
  );
}

function PanelTitle({ title }: { title: string }) {
  return (
    <div className="flex h-[28px] shrink-0 items-center border-t border-l border-[#ddd] bg-linear-to-b from-[#454545] to-[#5a5a5a] pr-1 pl-[3px] text-[15px] text-[#ddd]">
      <h2 className="flex-1">{title}</h2>
      <button type="button" aria-label="固定" className="mr-1.5">
        <Icon name="pin" className="size-3.5" />
      </button>
      <button type="button" aria-label="关闭" className="text-white">
        <Icon name="cross" className="size-3.5" />
      </button>
    </div>
  );
}

function TreePanel() {
  return (
    <aside className="flex w-[352px] shrink-0 flex-col">
      <PanelTitle title="树形菜单" />
      <div className="flex h-[28px] shrink-0 items-end gap-[14px] pl-2 text-[15px] leading-[23px] text-[#ddd]">
        <button type="button">菜单</button>
        <button type="button">表格</button>
        <button type="button">组</button>
        <button type="button" className="-ml-1.5 bg-[#f4f4f4] px-[5px] text-[#222]">
          工作
        </button>
      </div>
      <div className="min-h-0 flex-1 overflow-hidden border-2 border-[#e4e8ec] bg-[#cfdff1]">
        <ul>
          {TREE.map((row, i) => (
            <TreeRow key={i} row={row} />
          ))}
        </ul>
      </div>
    </aside>
  );
}

/* ---------- model view ---------- */

const SLOPE = -0.2635;
const LIGHT = "#12c5d4";
const MID = "#12b4c4";
const DARK = "#0b8d93";
const EDGE = "#0a6f78";

// An I-section chord: top flange, web and bottom flange between x1 and x2.
function Chord({ x1, y1, x2, h = 39 }: { x1: number; y1: number; x2: number; h?: number }) {
  const dy = (x2 - x1) * SLOPE;
  const band = (a: number, b: number) => `${x1},${y1 + a} ${x2},${y1 + dy + a} ${x2},${y1 + dy + b} ${x1},${y1 + b}`;
  return (
    <g stroke={EDGE} strokeWidth=".8">
      <polygon points={band(0, h - 22)} fill={LIGHT} />
      <polygon points={band(h - 22, h - 6)} fill={DARK} />
      <polygon points={band(h - 6, h)} fill={LIGHT} />
      <line x1={x1} y1={y1 + 9} x2={x2} y2={y1 + dy + 9} strokeDasharray="2 2" />
    </g>
  );
}

function Brace({ p, w = 12, dark = false }: { p: [number, number, number, number]; w?: number; dark?: boolean }) {
  const [x1, y1, x2, y2] = p;
  return (
    <g>
      <line x1={x1} y1={y1} x2={x2} y2={y2} stroke="#2c0078" strokeWidth={w} />
      <line x1={x1} y1={y1} x2={x2} y2={y2} stroke={dark ? "#3c0096" : "#5800cc"} strokeWidth={w - 1.5} />
      <line x1={x1 + 2} y1={y1 + 2} x2={x2 + 2} y2={y2 + 2} stroke="#3a0092" strokeWidth={w / 3} />
    </g>
  );
}

function MagentaColumn({ x, y1, y2, w = 29 }: { x: number; y1: number; y2: number; w?: number }) {
  return (
    <g stroke="#78007c" strokeWidth=".8">
      <rect x={x} y={y1} width={w} height={y2 - y1} fill="#c400c4" />
      <rect x={x + 11} y={y1} width={13} height={y2 - y1} fill="#8e0090" />
    </g>
  );
}

function GreenBeam({ dx, dy }: { dx: number; dy: number }) {
  return (
    <g transform={`translate(${dx} ${dy})`} stroke="#0a6a26" strokeWidth=".8">
      <polygon points="1054,401 1070,395 1228,521 1216,532 1205,548 1053,423" fill="#12ac3c" />
      <polygon points="1054,404 1217,532 1205,548 1053,423" fill="#109c38" />
      <path d="M1054 416L1208 543" fill="none" />
    </g>
  );
}

function Arrow({ x, y }: { x: number; y: number }) {
  return <polygon points={`${x - 4},${y - 11} ${x + 4},${y - 11} ${x},${y + 1}`} fill="#d010e0" />;
}

const BAYS = [
  [0, 0],
  [345, -90],
  [690, -180],
];

const LABELS: [number, number][] = [
  [702, 420],
  [786, 490],
  [1047, 330],
  [702, 661],
  [869, 797],
  [1047, 570],
  [1213, 466],
  [1391, 481],
  [1558, 377],
  [1213, 706],
  [1558, 613],
];

function ModelView() {
  return (
    <svg viewBox="587 270 1078 582" preserveAspectRatio="xMinYMin slice" className="block size-full" role="img" aria-label="模型">
      <Chord x1={727} y1={713} x2={1700} h={38} />
      {/* back columns */}
      <MagentaColumn x={1041} y1={424} y2={636} />
      <MagentaColumn x={1386} y1={334} y2={546} w={28} />
      {[0, 1].map((i) => (
        <g key={i} transform={`translate(${i * 345} ${i * -90})`}>
          <path d="M1024 615l22 24h22l22-24-12-14h-40z" fill="#42009c" />
          <path d="M1041 600h29v32c-4 10-24 10-29 0z" fill="#c400c4" />
          <path d="M1052 600h12v38h-12z" fill="#8e0090" />
          <path d="M1047 640h12v8l-6 3-6-4z" fill="#7c00a0" />
        </g>
      ))}
      <GreenBeam dx={0} dy={241} />
      <GreenBeam dx={345} dy={151} />
      {BAYS.map(([dx, dy]) => (
        <Brace key={dx} p={[890 + dx, 691 + dy, 1206 + dx, 774 + dy]} w={13} />
      ))}
      <Chord x1={870} y1={856} x2={1700} />

      {/* rear left column */}
      <g stroke={EDGE} strokeWidth=".8">
        <polygon points="706,500 722,500 722,792 706,795" fill={DARK} />
        <polygon points="722,510 730,512 730,798 722,792" fill={MID} />
        <polygon points="692,492 706,499 706,803 692,794" fill={MID} />
        <line x1="698" y1="495" x2="698" y2="798" />
      </g>

      <Chord x1={704} y1={476} x2={1700} h={41} />
      {BAYS.map(([dx, dy]) => (
        <g key={dx}>
          <Brace p={[878 + dx, 454 + dy, 722 + dx, 720 + dy]} w={13} />
          <Brace p={[888 + dx, 449 + dy, 1003 + dx, 588 + dy]} w={10} dark />
          <Brace p={[887 + dx, 451 + dy, 1206 + dx, 536 + dy]} w={13} />
        </g>
      ))}
      <GreenBeam dx={0} dy={0} />
      <GreenBeam dx={346} dy={-90} />
      {BAYS.map(([dx, dy]) => (
        <g key={dx}>
          <Brace p={[883 + dx, 447 + dy, 878 + dx, 612 + dy]} w={10} />
          <path d={`M${877 + dx} ${445 + dy}l12-2 6 10-17 6z`} fill="#5000c0" />
          <path d={`M${878 + dx} ${431 + dy}l11 9`} stroke={EDGE} fill="none" />
        </g>
      ))}

      {/* end frame cross beams */}
      <g stroke={EDGE} strokeWidth=".8">
        <polygon points="698,725 728,726 860,830 860,858 832,858 702,751" fill={LIGHT} />
        <polygon points="706,736 858,857 832,858 702,751" fill={MID} />
        <polygon points="698,485 724,480 888,612 872,620 865,645 702,513" fill={LIGHT} />
        <polygon points="706,497 872,619 865,645 702,513" fill={MID} />
        <polygon points="704,500 712,496 712,507 704,504" fill={DARK} />
      </g>
      <polygon points="716,722 724,708 726,723" fill="#4c00b4" />

      <polygon points="866,618 890,611 890,636 866,640" fill={LIGHT} />
      <Chord x1={883} y1={611} x2={1700} />
      <g stroke={EDGE} strokeWidth=".8">
        <polygon points="871,634 889,634 889,860 871,860" fill={DARK} />
        <polygon points="889,631 896,634 896,860 889,860" fill={MID} />
        <polygon points="859,628 871,636 871,860 859,860" fill={MID} />
      </g>
      <rect x="873" y="624" width="9" height="10" fill="none" stroke="#123a8a" strokeWidth="1.500" />
      <circle cx="877" cy="630" r="2" fill="#1616c8" />
      <circle cx="882" cy="690" r="2" fill="#1616c8" />
      <circle cx="709" cy="795" r="2" fill="#1616c8" />

      {/* front face bracing */}
      {BAYS.map(([dx, dy]) => (
        <g key={dx}>
          <Brace p={[1048 + dx, 590 + dy, 898 + dx, 844 + dy]} w={13} />
          <path d={`M${893 + dx} ${838 + dy}l10 8-7 12h-12z`} fill="#4600a8" />
          <Brace p={[1056 + dx, 592 + dy, 1216 + dx, 772 + dy]} w={11} dark />
          <path d={`M${1052 + dx} ${584 + dy}l14 10-30 8z`} fill="#4600a8" />
        </g>
      ))}

      {[0, 1].map((i) => (
        <g key={i}>
          <MagentaColumn x={1207 + i * 346} y1={545 - i * 91} y2={780 - i * 91} />
          <path
            d={`M${1213 + i * 346} ${541 - i * 91}v14l8-5h8l8 4v-12z`}
            fill="#b400b8"
            stroke="#58005c"
            strokeWidth=".8"
          />
          <rect x={1219 + i * 346} y={538 - i * 91} width="9" height="12" fill="none" stroke="#222" />
          <path d={`M${1213 + i * 346} ${779 - i * 91}h20l-5 8h-12z`} fill="#3c0096" />
          <circle cx={1227 + i * 346} cy={600 - i * 91} r="2" fill="#3010c8" />
          <path d={`M${1050 + i * 346} ${406 - i * 91}l-4 2v14l8 4v-12z`} fill="#b400b8" stroke="#58005c" strokeWidth=".8" />
        </g>
      ))}

      {/* load diagram */}
      <g fill="none" stroke="#7068dc" strokeWidth=".9">
        <path d="M710 490V446L794 515V560" />
        <path d="M710 733V687L858 806M877 852V820" />
        <path d="M1054 400V356L1213 484L1221 494V535" />
        <path d="M1054 645V597L1205 721L1221 730V778" />
        <path d="M1400 305V266L1566 400V445" />
        <path d="M1400 548V508L1549 628L1567 640V688" />
      </g>
      <Arrow x={710} y={494} />
      <Arrow x={794} y={560} />
      <Arrow x={710} y={735} />
      <Arrow x={1054} y={403} />
      <Arrow x={1054} y={645} />
      <Arrow x={1222} y={539} />
      <Arrow x={1221} y={782} />
      <Arrow x={1400} y={313} />
      <Arrow x={1399} y={555} />
      <Arrow x={1567} y={449} />
      <Arrow x={1567} y={691} />

      <g fontFamily="'Noto Sans', sans-serif" fontSize="20" fontWeight="500" fill="#0a0a0a" textAnchor="middle">
        {LABELS.map(([x, y]) => (
          <text key={`${x}-${y}`} transform={`translate(${x + 7} ${y}) rotate(-90)`}>
            -13.0
          </text>
        ))}
      </g>

      <path
        d="M598 820l7-5 12 1 20 18-10 12-28-22zM627 846l54-11 2-8-20-3-38 12M612 828a6 4 0 1012 6M660 832l12-6"
        fill="none"
        stroke="#b9c4b4"
        strokeWidth=".9"
      />

      {/* orientation cube */}
      <rect x="1595" y="783" width="70" height="70" fill="#000" />
      <path d="M1608 836l16-12 30 14-30 8z" fill="#1414f0" />
      <path
        d="M1607 800l30-8 17 15-30 7zM1607 800v31l17 15 30-8v-31M1624 814v32M1637 792v31l17 15M1637 823l-30 8"
        fill="none"
        stroke="#ddd"
      />
      <g fontFamily="'Liberation Mono', monospace" fontSize="15" fill="#f0f020">
        <text x="1623" y="827">Z</text>
        <text x="1607" y="845">Y</text>
        <text x="1654" y="848">X</text>
      </g>
    </svg>
  );
}

function ModelWindow() {
  return (
    <section className="flex min-h-0 flex-1 flex-col">
      <div className="flex h-[31px] shrink-0 items-end border-b border-[#888] bg-[#cdcdcd]">
        <button type="button" aria-label="上一个" className="flex h-full w-5 items-center justify-center text-[#555]">
          <svg viewBox="0 0 8 12" className="h-3 w-2" aria-hidden="true">
            <path d="M7 1v10L1 6z" fill="none" stroke="currentColor" />
          </svg>
        </button>
        <div className="flex h-[28px] w-[156px] items-center bg-[#f6f6f6] pb-0.5 pl-8 [clip-path:polygon(26px_0,100%_0,100%_100%,0_100%)]">
          <Logo className="h-5 w-[22px]" />
          <span className="ml-2 text-[15px] font-bold text-black">模型窗口</span>
          <button type="button" aria-label="关闭窗口" className="ml-3 text-[#555]">
            <Icon name="cross" className="size-3.5" />
          </button>
        </div>
        <button type="button" aria-label="下一个" className="ml-auto flex h-full w-8 items-center justify-center text-[#555]">
          <svg viewBox="0 0 8 12" className="h-3 w-2" aria-hidden="true">
            <path d="M1 1v10l6-5z" fill="none" stroke="currentColor" />
          </svg>
        </button>
      </div>
      <div className="min-h-0 flex-1 border-t-2 border-r-4 border-b-4 border-l-4 border-[#f2f2f2] border-t-[#777] bg-linear-to-b from-[#bdbdbd] from-8% via-[#dadad2] via-45% to-[#f7f9e8]">
        <ModelView />
      </div>
    </section>
  );
}

/* ---------- message window ---------- */

function MessageWindow() {
  return (
    <section className="mt-1.5 flex h-[166px] shrink-0 flex-col">
      <PanelTitle title="信息窗口" />
      <div className="flex h-[86px] border-t-3 border-[#8b8b8b] bg-[#f5f7ec]">
        <textarea aria-label="命令信息" className="flex-1 resize-none bg-transparent px-1 text-sm outline-none" />
        <div className="mr-1 flex w-5 flex-col items-center justify-between bg-[#efefef] py-2 text-[#999]">
          <Chevron d={UP} className="size-3" />
          <Chevron d={DOWN} className="size-3" />
        </div>
      </div>
      <label className="flex h-7 items-center border-t-2 border-[#777] bg-[#f5f7ea] pt-1 pl-1 text-[#555]">
        <span className="flex">
          <Chevron d={RIGHT} className="size-3" />
          <Chevron d={RIGHT} className="-ml-0.5 size-3" />
        </span>
        <input type="text" aria-label="命令" className="flex-1 bg-transparent px-1 outline-none" />
      </label>
      <div className="flex h-6 bg-[#ededed]">
        <div className="flex flex-1 border-t border-[#222]">
          {["M4 1v10M10 1L5 6l5 5z", "M8 1L3 6l5 5z", "M4 1l5 5-5 5z", "M8 1v10M2 1l5 5-5 5z"].map((d) => (
            <button
              key={d}
              type="button"
              aria-label="滚动标签"
              className="flex w-[23px] items-center justify-center border border-[#888] border-t-white border-l-white bg-[#e4e4e4] text-[#a5a5a5]"
            >
              <svg viewBox="0 0 12 12" className="size-3" aria-hidden="true">
                <path d={d} fill="currentColor" stroke="currentColor" />
              </svg>
            </button>
          ))}
          <div className="relative -mt-px ml-0.5 flex w-[76px] items-center justify-center text-sm font-bold text-black">
            <svg viewBox="0 0 76 24" className="absolute inset-0 size-full" aria-hidden="true">
              <path d="M2 0l6 23h61l6-23" fill="#fff" stroke="#222" />
            </svg>
            <button type="button" className="relative pb-0.5">
              命令信息
            </button>
          </div>
          <div className="relative -mt-px -ml-2 flex w-[78px] items-center justify-center text-sm text-black">
            <svg viewBox="0 0 78 24" className="absolute inset-0 size-full" aria-hidden="true">
              <path d="M4 10l4 13h62l6-23" fill="none" stroke="#222" />
            </svg>
            <button type="button" className="relative pb-0.5">
              分析信息
            </button>
          </div>
        </div>
        <div className="flex w-[356px] items-center pr-1 text-[#444]">
          <Chevron d={LEFT} className="mx-1 size-3" />
          <div className="h-5 w-[22px] bg-[#c8c8c8]" />
          <Chevron d={RIGHT} className="mr-1 ml-auto size-3" />
        </div>
      </div>
    </section>
  );
}

/* ---------- right toolbar ---------- */

function Dots() {
  return (
    <div className="flex h-[13px] shrink-0 items-center justify-center">
      <div className="w-3 border-t-2 border-dotted border-[#333]" />
    </div>
  );
}

function SideGroup({ icons, className }: { icons: string[]; className: string }) {
  return (
    <div className={`flex shrink-0 flex-col items-center justify-around ${className}`}>
      {icons.map((name) => (
        <button key={name} type="button" aria-label={name} className="flex h-[27px] w-[29px] items-center justify-center">
          <Icon name={name} className="size-[22px]" />
        </button>
      ))}
    </div>
  );
}

function SideBar() {
  return (
    <div className="ml-px w-[33px] shrink-0">
      <div className="rounded-b-xs bg-[#d0d0d0]">
        <Dots />
        <SideGroup className="h-[27px]" icons={["grid"]} />
        <Dots />
        <SideGroup className="h-[29px]" icons={["gridCheck"]} />
        <Dots />
        <SideGroup className="h-[147px]" icons={["zoomAuto", "zoomWin", "zoomIn", "zoomOut", "zoomFit"]} />
        <Dots />
        <SideGroup className="h-[89px]" icons={["zoomDyn", "pan", "rotate"]} />
        <Dots />
        <SideGroup className="h-[60px]" icons={["winRefresh", "winFit"]} />
        <div className="mx-1.5 my-[3px] h-px bg-[#666]" />
        <SideGroup className="h-[149px]" icons={["cubeFront", "cubeTop", "cubeSide", "cubeBack", "iso"]} />
        <div className="mx-1.5 my-[3px] h-px bg-[#666]" />
        <SideGroup className="h-[60px]" icons={["winPrev", "winDoc"]} />
      </div>
    </div>
  );
}

/* ---------- status bar ---------- */

function StatusSelect({ label, value, className }: { label: string; value: string; className: string }) {
  return (
    <div className={`relative h-6 shrink-0 border border-[#aaa] bg-[#e4e4e4] text-[#222] ${className}`}>
      <select
        aria-label={label}
        className="block size-full appearance-none bg-transparent pl-1 font-['Liberation_Mono',monospace] text-sm leading-5"
      >
        <option>{value}</option>
      </select>
      <Chevron d={DOWN} className="pointer-events-none absolute top-1.5 right-1 size-2.5 text-[#666]" />
    </div>
  );
}

function StatusBar() {
  return (
    <footer className="flex h-[35px] shrink-0 bg-[#222] pl-2 text-sm leading-6 text-[#ddd]">
      <div className="flex-1 pt-[3px] pl-1.5">单选</div>
      <div className="w-[116px] border-l border-[#666] pt-[3px] pl-[11px]">杆系-26</div>
      <div className="w-[171px] border-l border-[#666] pt-[3px] pl-1">U: 0, 2.5, 1.5</div>
      <div className="w-[173px] border-l border-[#666] pt-[3px] pl-1">G: 0, 2.5, 1.5</div>
      <StatusSelect label="力单位" value="kN" className="mr-[3px] w-[53px]" />
      <StatusSelect label="长度单位" value="m" className="mr-px w-[54px]" />
      <div className="mr-[30px] flex h-[22px] w-[282px] items-center bg-[#ececec] font-['Liberation_Mono',monospace] text-[15px] text-[#333]">
        {[
          "M6 6h8v8H6zM10 1v4M10 15v4M1 10h4M15 10h4",
          "M4 2v16M8 2v16M1 10h7M11 6h8M11 13h8M14 3l-3 3 3 3",
          "M6 1v18l8-9z",
        ].map((d) => (
          <button key={d} type="button" aria-label="步骤" className="mx-[3px] flex h-[22px] w-[19px] items-center bg-[#b8d4d0]">
            <svg viewBox="0 0 20 20" className="size-5" aria-hidden="true">
              <path d={d} fill="#777" fillOpacity=".5" stroke="#555" strokeWidth="1.500" />
            </svg>
          </button>
        ))}
        <StatusSelect label="选项" value="no" className="mx-0.5 w-[47px]" />
        <button type="button" className="ml-1 h-[22px] w-[21px] border border-[#35cfc9] bg-white leading-5 underline">
          ?
        </button>
        <span className="ml-[3px] h-[22px] w-[22px] bg-[#06f3ec]" />
        <span className="ml-0.5 text-[#777]">1</span>
        <span className="ml-2 flex flex-col text-[#777]">
          <Caret className="rotate-180" />
          <Caret className="mt-1" />
        </span>
        <span className="ml-2">/</span>
        <input
          aria-label="数量"
          defaultValue="2"
          className="ml-0.5 h-[22px] w-[28px] border border-[#777] bg-white text-center text-[15px]"
        />
        <span className="flex h-[22px] flex-1 flex-col items-center justify-around bg-[#b4b8ba] text-[#444]">
          <Caret className="rotate-180" />
          <Caret />
        </span>
      </div>
    </footer>
  );
}

/* ---------- recording overlays ---------- */

const CLASS_TOOLS = ["画板", "签到", "答题卡", "画中画", "举手", "预览", "工具"];

function ClassBar() {
  return (
    <div className="absolute bottom-0 left-px flex h-[30px] w-[746px] items-center rounded-tr-lg border-b-2 border-black bg-[#36413e] pt-2.5 pr-8 pl-1 text-base leading-5 text-[#a9b0ae]">
      <div className="flex flex-1">
        {CLASS_TOOLS.map((tool) => (
          <button key={tool} type="button" className="w-[75px] text-center whitespace-nowrap">
            {tool}
          </button>
        ))}
      </div>
      <button type="button" aria-label="关闭直播">
        <svg viewBox="0 0 24 24" className="mb-1 size-6" aria-hidden="true">
          <path d="M7 5a9.500 9.500 0 1010 0M12 1v11" fill="none" stroke="#b6bcba" strokeWidth="2" />
        </svg>
      </button>
    </div>
  );
}

function Taskbar() {
  return (
    <div className="flex h-[11px] shrink-0 items-start gap-3 overflow-hidden bg-linear-to-b from-[#d9dfe4] to-[#b4bec8] pr-6">
      <div className="ml-auto h-2 w-6 bg-[#f0e878]" />
      <div className="flex gap-3.5">
        <span className="h-0.5 w-3 bg-[#444]" />
        <span className="h-1 w-3 rounded-b-full border border-t-0 border-[#444]" />
        <span className="h-0.5 w-2 bg-[#444]" />
        <span className="h-0.5 w-8 border-t-2 border-dashed border-[#444]" />
      </div>
      <span className="-mt-2.5 size-4 rounded-full border border-[#777]" />
      <span className="mr-10 ml-12 h-1 w-2 border-x border-b border-[#777]" />
      <span className="-mt-2.5 ml-6 size-4 rounded-full border border-[#777]" />
      <span className="h-1.5 w-5 rounded-b-xs border border-t-0 border-[#555]" />
    </div>
  );
}

function RecordFrame() {
  return (
    <div className="pointer-events-none absolute inset-0">
      <div className="absolute top-[10px] right-1.5 bottom-[34px] left-1.5 border border-[#c23038]" />
      <div className="absolute top-2 left-1 h-8 w-7 border-t-4 border-l-4 border-[#cc0814]" />
      <div className="absolute top-2 right-1 h-7 w-7 border-t-4 border-r-4 border-[#cc0814]" />
      <div className="absolute bottom-[31px] left-1 h-7 w-7 border-b-4 border-l-4 border-[#cc0814]" />
      <div className="absolute right-1 bottom-[31px] h-7 w-7 border-r-4 border-b-4 border-[#cc0814]" />
      <div className="absolute top-0.5 left-[712px] flex h-[9px] w-20 items-center bg-[#d4101e] px-1">
        <div className="w-full border-t-3 border-dotted border-[#f3a0a4]" />
      </div>
      <div className="absolute top-6 right-[34px] flex h-8 items-center gap-5 text-[32px] leading-8 font-bold text-[#d2101c]">
        <span className="pt-3 font-['Liberation_Mono',monospace] leading-5">***</span>
        <span>制作</span>
      </div>
      <div className="absolute top-[26px] right-7 text-white">
        <Icon name="cross" className="size-4" />
      </div>
      {/* click highlight and pointer */}
      <div className="absolute top-[198px] left-[180px] size-8 rounded-full bg-[#3fa83c]/75" />
      <svg viewBox="0 0 14 22" className="absolute top-[212px] left-[196px] h-[22px] w-3.5" aria-hidden="true">
        <path d="M1 1v17l4-4 3 7 3-1-3-7h5z" fill="#fff" stroke="#222" />
      </svg>
    </div>
  );
}

export default function App() {
  return (
    <div className="h-screen bg-black px-[209px] font-['Open_Sans','Noto_Sans_CJK_SC',sans-serif]">
      <svg className="absolute size-0" aria-hidden="true">
        <radialGradient id="ball" cx=".35" cy=".35" r=".8">
          <stop offset="0" stopColor="#f2f2f2" />
          <stop offset="1" stopColor="#6b6b6b" />
        </radialGradient>
      </svg>
      <div className="relative flex h-full flex-col overflow-hidden bg-[#04101f] pt-[5px]">
        <div className="ml-[3px] flex min-h-0 flex-1 flex-col border-t-4 border-l-5 border-[#c3838d] border-t-[#f2eef0] bg-[#4b4947]">
          <Header />
          <div className="flex min-h-0 flex-1 flex-col pr-2 pl-2">
            <Ribbon />
            <Toolbar />
            <main className="flex min-h-0 flex-1">
              <TreePanel />
              <div className="ml-1.5 flex min-w-0 flex-1 flex-col">
                <ModelWindow />
                <MessageWindow />
              </div>
              <SideBar />
            </main>
          </div>
          <StatusBar />
        </div>
        <Taskbar />
        <div className="h-1.5 shrink-0 bg-[#06152c]" />
        <ClassBar />
        <RecordFrame />
      </div>
    </div>
  );
}
